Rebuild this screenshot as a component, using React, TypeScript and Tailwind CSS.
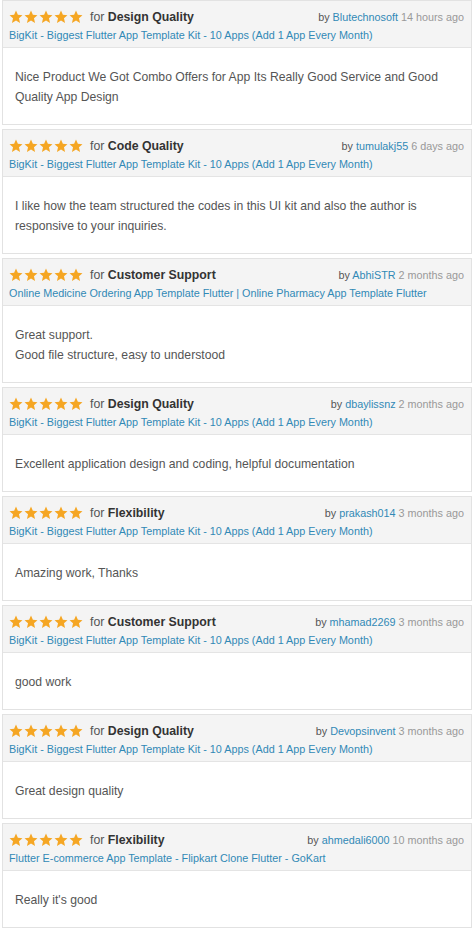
const reviews = [
  {
    category: "Design Quality",
    user: "Blutechnosoft",
    time: "14 hours ago",
    item: "BigKit - Biggest Flutter App Template Kit - 10 Apps (Add 1 App Every Month)",
    body: ["Nice Product We Got Combo Offers for App Its Really Good Service and Good Quality App Design"],
  },
  {
    category: "Code Quality",
    user: "tumulakj55",
    time: "6 days ago",
    item: "BigKit - Biggest Flutter App Template Kit - 10 Apps (Add 1 App Every Month)",
    body: ["I like how the team structured the codes in this UI kit and also the author is responsive to your inquiries."],
  },
  {
    category: "Customer Support",
    user: "AbhiSTR",
    time: "2 months ago",
    item: "Online Medicine Ordering App Template Flutter | Online Pharmacy App Template Flutter",
    body: ["Great support.", "Good file structure, easy to understood"],
  },
  {
    category: "Design Quality",
    user: "dbaylissnz",
    time: "2 months ago",
    item: "BigKit - Biggest Flutter App Template Kit - 10 Apps (Add 1 App Every Month)",
    body: ["Excellent application design and coding, helpful documentation"],
  },
  {
    category: "Flexibility",
    user: "prakash014",
    time: "3 months ago",
    item: "BigKit - Biggest Flutter App Template Kit - 10 Apps (Add 1 App Every Month)",
    body: ["Amazing work, Thanks"],
  },
  {
    category: "Customer Support",
    user: "mhamad2269",
    time: "3 months ago",
    item: "BigKit - Biggest Flutter App Template Kit - 10 Apps (Add 1 App Every Month)",
    body: ["good work"],
  },
  {
    category: "Design Quality",
    user: "Devopsinvent",
    time: "3 months ago",
    item: "BigKit - Biggest Flutter App Template Kit - 10 Apps (Add 1 App Every Month)",
    body: ["Great design quality"],
  },
  {
    category: "Flexibility",
    user: "ahmedali6000",
    time: "10 months ago",
    item: "Flutter E-commerce App Template - Flipkart Clone Flutter - GoKart",
    body: ["Really it's good"],
  },
]

function Star() {
  return (
    <svg width="14" height="14" viewBox="0 0 24 24">
      <path
        d="M12 1l3.2 7.3 7.9.7-6 5.3 1.8 7.8L12 18l-6.9 4.1 1.8-7.8-6-5.3 7.9-.7z"
        fill="#f5a623"
      />
    </svg>
  )
}

function ReviewCard({ review }: { review: (typeof reviews)[number] }) {
  return (
    <div className="border border-[#e2e2e2] bg-white">
      <div className="bg-[#f4f4f4] border-b border-[#e4e4e4] px-[6px] pt-[6px] pb-[3px]">
        <div className="flex items-center justify-between h-[20px]">
          <div className="flex items-center">
            <div className="flex items-center gap-[1px]">
              {[0, 1, 2, 3, 4].map((i) => (
                <Star key={i} />
              ))}
            </div>
            <span className="ml-[7px] text-[12.3px] text-[#555]">
              for <b className="font-bold text-[#333]">{review.category}</b>
            </span>
          </div>
          <div className="text-[10.8px] text-[#999] mr-[1px]">
            <span className="text-[#555]">by </span>
            <a className="text-[#3189b6]">{review.user}</a> {review.time}
          </div>
        </div>
        <div className="h-[17px] leading-[17px] text-[10.8px] text-[#3189b6] whitespace-nowrap">
          {review.item}
        </div>
      </div>
      <div className="px-[12px] pt-[19px] pb-[17px] text-[12.2px] leading-[20px] text-[#555]">
        {review.body.map((line, i) => (
          <p key={i}>{line}</p>
        ))}
      </div>
    </div>
  )
}

export default function App() {
  return (
    <div
      className="w-[474px] min-h-[934px] bg-white px-[2px] flex flex-col gap-[4px]"
      style={{ fontFamily: '"Liberation Sans", Arial, sans-serif' }}
    >
      {reviews.map((review, i) => (
        <ReviewCard key={i} review={review} />
      ))}
    </div>
  )
}
